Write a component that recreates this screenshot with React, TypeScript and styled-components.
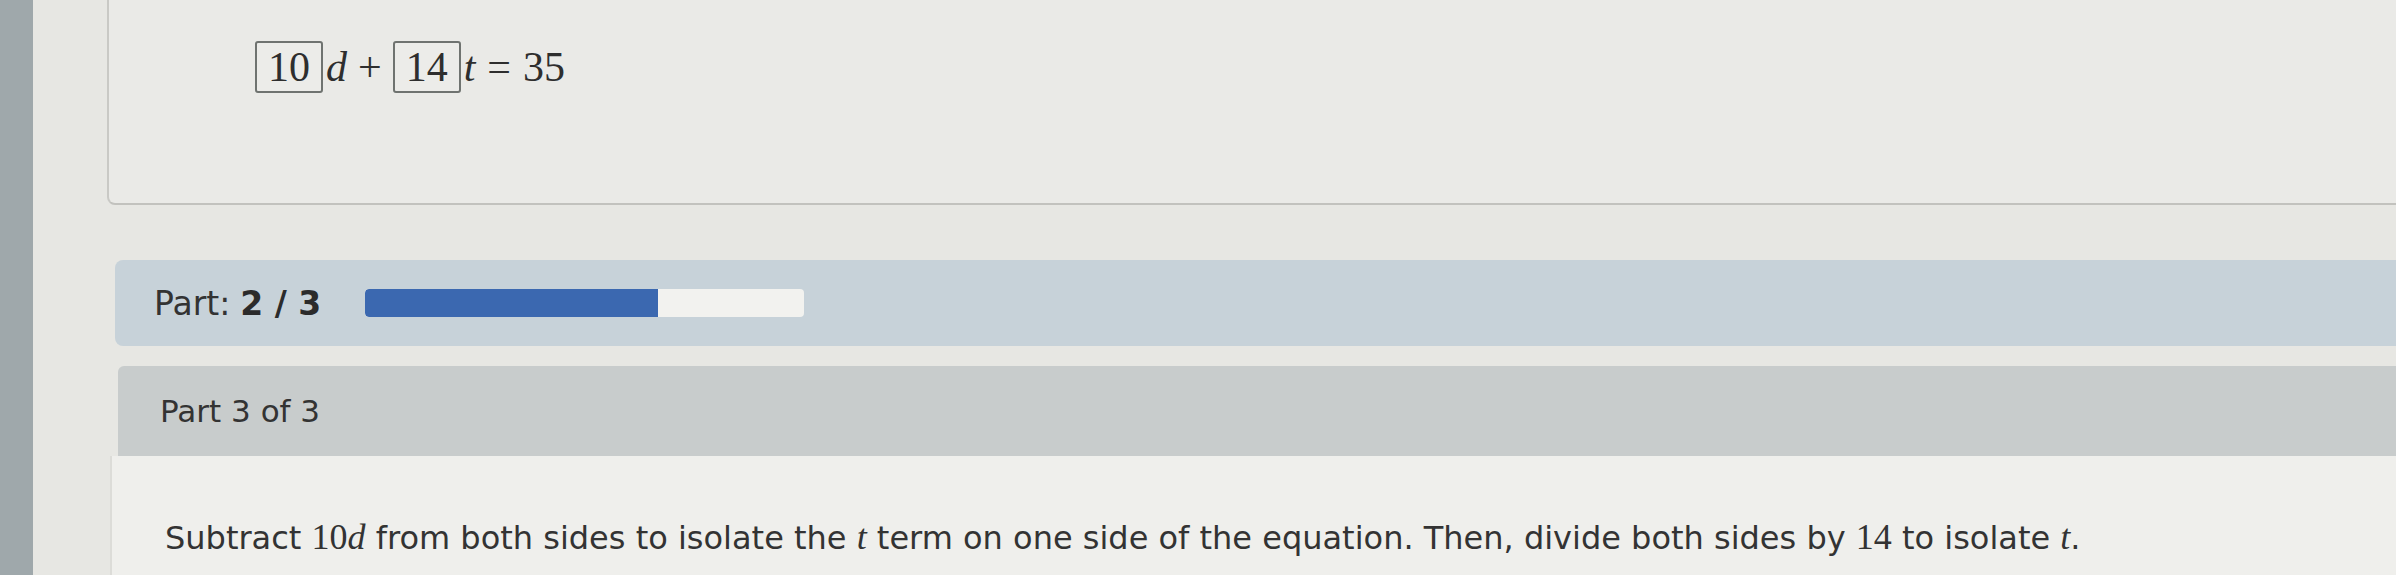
import React, {FC} from 'react';
import styled, {createGlobalStyle} from 'styled-components';

const GlobalStyle = createGlobalStyle`
  html, body {
    margin: 0;
    padding: 0;
    background: #e7e7e3;
    overflow: hidden;
  }
  body {
    font-family: "DejaVu Sans", Verdana, sans-serif;
    color: #333;
  }
`

const Page = styled.div`
  display: flex;
  width: 2396px;
  height: 575px;
  overflow: hidden;
`

const SideStrip = styled.div`
  width: 33px;
  flex: none;
  background: #9fa8ab;
`

const Main = styled.div`
  flex: 1;
  display: flex;
  flex-direction: column;
  padding-left: 74px;
  min-width: 0;
`

const QuestionCard = styled.div`
  height: 205px;
  box-sizing: border-box;
  background: #eaeae7;
  border-left: 2px solid #c9c9c5;
  border-bottom: 2px solid #c2c2be;
  border-bottom-left-radius: 8px;
  padding: 41px 0 0 146px;
`

const Equation = styled.div`
  display: flex;
  align-items: center;
  font-family: "Liberation Serif", "Times New Roman", serif;
  font-size: 42px;
  color: #2e2e2e;
  height: 52px;
`

const AnswerBox = styled.span`
  display: inline-flex;
  align-items: center;
  justify-content: center;
  box-sizing: border-box;
  width: 68px;
  height: 52px;
  border: 2px solid #6f7370;
  border-radius: 3px;
  background: #ecece9;
`

const Var = styled.i`
  font-family: "Liberation Serif", "Times New Roman", serif;
  font-style: italic;
`

const Op = styled.span<{ $gap: number }>`
  margin: 0 ${p => p.$gap}px;
`

const PartBar = styled.div`
  margin: 55px 0 0 8px;
  height: 86px;
  display: flex;
  align-items: center;
  padding-left: 39px;
  background: #c7d2d9;
  border-radius: 8px 0 0 8px;
  font-size: 33px;
`

const Strong = styled.b`
  font-weight: bold;
  margin-left: 10px;
  color: #2b2b2b;
`

const Track = styled.div`
  margin-left: 44px;
  width: 439px;
  height: 28px;
  background: #f2f2ef;
  border-radius: 4px;
  overflow: hidden;
`

const Fill = styled.div`
  height: 100%;
  background: #3b68b0;
  border-radius: 4px 0 0 4px;
`

const Section = styled.div`
  margin: 20px 0 0 11px;
  height: 90px;
  display: flex;
  align-items: center;
  padding-left: 42px;
  background: #c8cccc;
  font-size: 31px;
  border-radius: 6px 0 0 0;
`

const Body = styled.div`
  flex: 1;
  margin-left: 3px;
  background: #efefec;
  border-left: 2px solid #dcdcd8;
  padding: 60px 0 0 53px;
  font-size: 32px;
  white-space: nowrap;
`

const Num = styled.span`
  font-family: "Liberation Serif", "Times New Roman", serif;
  font-size: 36px;
`

const App: FC = () => {
    const part = 2
    const total = 3

    return (
        <>
            <GlobalStyle/>
            <Page>
                <SideStrip/>
                <Main>
                    <QuestionCard>
                        <Equation>
                            <AnswerBox>10</AnswerBox>
                            <Var style={{marginLeft: 3}}>d</Var>
                            <Op $gap={11}>+</Op>
                            <AnswerBox>14</AnswerBox>
                            <Var style={{marginLeft: 3}}>t</Var>
                            <Op $gap={12}>=</Op>
                            <span>35</span>
                        </Equation>
                    </QuestionCard>

                    <PartBar>
                        Part:<Strong>{part} / {total}</Strong>
                        <Track>
                            <Fill style={{width: `${(part / total) * 100}%`}}/>
                        </Track>
                    </PartBar>

                    <Section>Part 3 of 3</Section>

                    <Body>
                        Subtract <Num>10<Var>d</Var></Num> from both sides to isolate the <Num><Var>t</Var></Num> term
                        on one side of the equation. Then, divide both sides by <Num>14</Num> to isolate <Num><Var>t</Var></Num>.
                    </Body>
                </Main>
            </Page>
        </>
    );
};

export default App;
